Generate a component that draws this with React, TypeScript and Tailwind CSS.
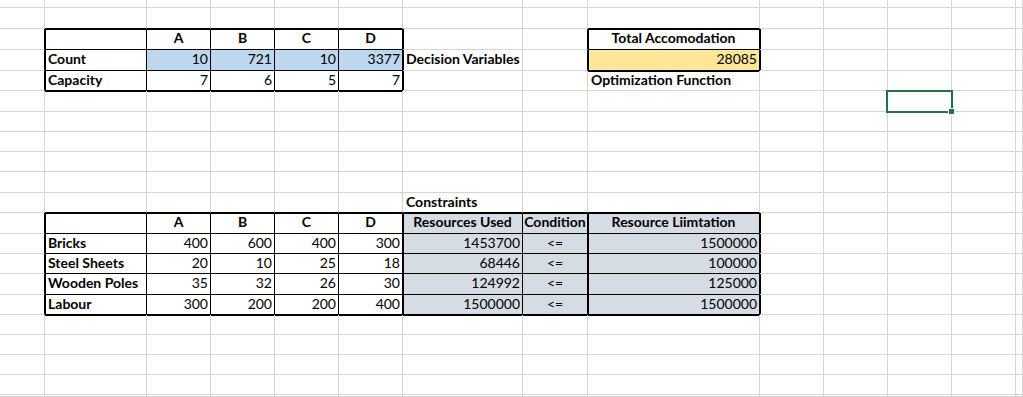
import React from "react";

// Column widths and row heights of the sheet (each includes its 1px gridline).
const COLS = [45, 102, 64, 64, 64, 64, 120, 65, 172, 64, 64, 64, 64, 20];
const ROWS = [8, 21, 21, 21, 20, 21, 20, 20, 20, 21, 20, 21, 20, 20, 21, 20, 20, 20, 20, 20, 10];

type Align = "l" | "c" | "r";
type Fill = "blue" | "yellow" | "slate";
type Cell = { t: string; a: Align; b?: boolean; fill?: Fill };

const cells = new Map<string, Cell>();
const put = (r: number, c: number, t: string, a: Align, b = false, fill?: Fill) =>
  cells.set(`${r},${c}`, { t, a, b, fill });

// Decision variables block
["A", "B", "C", "D"].forEach((h, i) => put(2, 2 + i, h, "c", true));
put(3, 1, "Count", "l", true);
["10", "721", "10", "3377"].forEach((v, i) => put(3, 2 + i, v, "r", false, "blue"));
put(3, 6, "Decision Variables", "l", true);
put(4, 1, "Capacity", "l", true);
["7", "6", "5", "7"].forEach((v, i) => put(4, 2 + i, v, "r"));

// Objective
put(2, 8, "Total Accomodation", "c", true);
put(3, 8, "28085", "r", false, "yellow");
put(4, 8, "Optimization Function", "l", true);

// Constraints block
put(10, 6, "Constraints", "l", true);
["A", "B", "C", "D"].forEach((h, i) => put(11, 2 + i, h, "c", true));
put(11, 6, "Resources Used", "c", true, "slate");
put(11, 7, "Condition", "c", true, "slate");
put(11, 8, "Resource Liimtation", "c", true, "slate");

const resources = [
  { name: "Bricks", vals: ["400", "600", "400", "300"], used: "1453700", limit: "1500000" },
  { name: "Steel Sheets", vals: ["20", "10", "25", "18"], used: "68446", limit: "100000" },
  { name: "Wooden Poles", vals: ["35", "32", "26", "30"], used: "124992", limit: "125000" },
  { name: "Labour", vals: ["300", "200", "200", "400"], used: "1500000", limit: "1500000" },
];
resources.forEach((row, i) => {
  const r = 12 + i;
  put(r, 1, row.name, "l", true);
  row.vals.forEach((v, j) => put(r, 2 + j, v, "r"));
  put(r, 6, row.used, "r", false, "slate");
  put(r, 7, "<=", "c", false, "slate");
  put(r, 8, row.limit, "r", false, "slate");
});

// Cell borders: bottom edge (h) and right edge (v) of a cell; 1 = thin, 2 = medium.
const hE = new Map<string, number>();
const vE = new Map<string, number>();
const k = (r: number, c: number) => `${r},${c}`;

function box(r0: number, r1: number, c0: number, c1: number) {
  for (let c = c0; c <= c1; c++) {
    hE.set(k(r0 - 1, c), 2);
    hE.set(k(r1, c), 2);
  }
  for (let r = r0; r <= r1; r++) {
    vE.set(k(r, c0 - 1), 2);
    vE.set(k(r, c1), 2);
  }
  for (let r = r0; r < r1; r++)
    for (let c = c0; c <= c1; c++) if (!hE.has(k(r, c))) hE.set(k(r, c), 1);
  for (let r = r0; r <= r1; r++)
    for (let c = c0; c < c1; c++) if (!vE.has(k(r, c))) vE.set(k(r, c), 1);
}

box(2, 4, 1, 5);
box(2, 3, 8, 8);
box(11, 15, 1, 8);
for (let r = 11; r <= 15; r++) {
  vE.set(k(r, 5), 2);
  vE.set(k(r, 7), 2);
}

const fillClass: Record<Fill, string> = {
  blue: "bg-[#bdd7ee]",
  yellow: "bg-[#ffe699]",
  slate: "bg-[#d6dce4]",
};

const alignClass: Record<Align, string> = {
  l: "justify-start pl-[3px]",
  c: "justify-center",
  r: "justify-end pr-[2px]",
};

function SheetCell({ r, c }: { r: number; c: number }) {
  const cell = cells.get(k(r, c));
  const right = vE.has(k(r, c)) ? "border-r-black" : "border-r-[#d4d4d4]";
  const bottom = hE.has(k(r, c)) ? "border-b-black" : "border-b-[#d4d4d4]";
  const insetL = vE.get(k(r, c - 1)) === 2;
  const insetT = hE.get(k(r - 1, c)) === 2;
  const shadow =
    insetL && insetT
      ? "shadow-[inset_1px_1px_0_#000]"
      : insetL
      ? "shadow-[inset_1px_0_0_#000]"
      : insetT
      ? "shadow-[inset_0_1px_0_#000]"
      : "";
  const selected = r === 5 && c === 11;

  return (
    <div
      className={`relative flex items-start border-r border-b ${right} ${bottom} ${shadow} ${
        cell?.fill ? fillClass[cell.fill] : ""
      } ${cell ? alignClass[cell.a] : ""} ${selected ? "z-10" : ""}`}
    >
      {cell && (
        <span
          className={`whitespace-nowrap text-[14px] leading-[18px] text-black ${
            cell.b ? "font-bold" : "font-normal"
          }`}
        >
          {cell.t}
        </span>
      )}
      {selected && (
        <>
          <div className="pointer-events-none absolute -left-[2px] -top-[1px] h-[23px] w-[67px] border-2 border-[#217346]" />
          <div className="pointer-events-none absolute left-[60px] top-[17px] h-[7px] w-[7px] border border-white bg-[#217346]" />
        </>
      )}
    </div>
  );
}

export default function App() {
  return (
    <div className="h-[397px] w-[1023px] overflow-hidden bg-white font-[Lato,'Noto_Sans',sans-serif]">
      <div className="grid h-full w-full grid-cols-[45px_102px_64px_64px_64px_64px_120px_65px_172px_64px_64px_64px_64px_1fr] grid-rows-[8px_21px_21px_21px_20px_21px_20px_20px_20px_21px_20px_21px_20px_20px_21px_20px_20px_20px_20px_20px_1fr]">
        {ROWS.map((_, r) => COLS.map((__, c) => <SheetCell key={`${r}-${c}`} r={r} c={c} />))}
      </div>
    </div>
  );
}
